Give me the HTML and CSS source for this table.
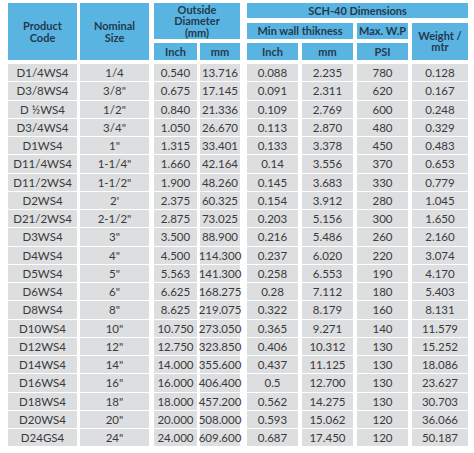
FILE: index.html
```html
<!DOCTYPE html>
<html>
<head>
<meta charset="utf-8">
<link rel="stylesheet" href="styles.css">
</head>
<body>
<div class="table">
  <div class="head">
    <div class="h c-code">Product<br>Code</div>
    <div class="h c-nom">Nominal<br>Size</div>
    <div class="h c-od">Outside<br>Diameter<br>(mm)</div>
    <div class="h c-sch">SCH-40 Dimensions</div>
    <div class="h c-min">Min wall thikness</div>
    <div class="h c-max">Max. W.P</div>
    <div class="h c-wt">Weight /<br>mtr</div>
    <div class="h r3 col3">Inch</div>
    <div class="h r3 col4">mm</div>
    <div class="h r3 col5">Inch</div>
    <div class="h r3 col6">mm</div>
    <div class="h r3 col7">PSI</div>
  </div>
  <div class="body" id="body"></div>
</div>
<script src="app.js"></script>
</body>
</html>
```
FILE: app.js
```js
const rows = [
["D1/4WS4","1/4","0.540","13.716","0.088","2.235","780","0.128"],
["D3/8WS4","3/8\"","0.675","17.145","0.091","2.311","620","0.167"],
["D ½WS4","1/2\"","0.840","21.336","0.109","2.769","600","0.248"],
["D3/4WS4","3/4\"","1.050","26.670","0.113","2.870","480","0.329"],
["D1WS4","1\"","1.315","33.401","0.133","3.378","450","0.483"],
["D11/4WS4","1-1/4\"","1.660","42.164","0.14","3.556","370","0.653"],
["D11/2WS4","1-1/2\"","1.900","48.260","0.145","3.683","330","0.779"],
["D2WS4","2'","2.375","60.325","0.154","3.912","280","1.045"],
["D21/2WS4","2-1/2\"","2.875","73.025","0.203","5.156","300","1.650"],
["D3WS4","3\"","3.500","88.900","0.216","5.486","260","2.160"],
["D4WS4","4\"","4.500","114.300","0.237","6.020","220","3.074"],
["D5WS4","5\"","5.563","141.300","0.258","6.553","190","4.170"],
["D6WS4","6\"","6.625","168.275","0.28","7.112","180","5.403"],
["D8WS4","8\"","8.625","219.075","0.322","8.179","160","8.131"],
["D10WS4","10\"","10.750","273.050","0.365","9.271","140","11.579"],
["D12WS4","12\"","12.750","323.850","0.406","10.312","130","15.252"],
["D14WS4","14\"","14.000","355.600","0.437","11.125","130","18.086"],
["D16WS4","16\"","16.000","406.400","0.5","12.700","130","23.627"],
["D18WS4","18\"","18.000","457.200","0.562","14.275","130","30.703"],
["D20WS4","20\"","20.000","508.000","0.593","15.062","120","36.066"],
["D24GS4","24\"","24.000","609.600","0.687","17.450","120","50.187"]
];
const body = document.getElementById("body");
for (const r of rows) {
  r.forEach((v, i) => {
    const d = document.createElement("div");
    d.className = "d k" + (i + 1);
    d.textContent = v;
    body.appendChild(d);
  });
}
```
FILE: styles.css
```css
html, body { margin: 0; padding: 0; background: #ffffff; }
body { padding: 3px 0 0 8px; }
.table { width: 460px; }
.head, .body {
  display: grid;
  grid-template-columns: 69px 3px 69px 5px 43px 3px 40px 7px 51px 4px 51px 4px 51px 4px 56px;
  column-gap: 0;
}
.head {
  grid-template-rows: 15px 16px 17px;
  row-gap: 4.5px;
}
.body {
  margin-top: 4px;
  grid-auto-rows: 17.25px;
  row-gap: 1px;
}
.h {
  background: #5ab4e1;
  color: #233a4e;
  font-family: Lato, "Open Sans", sans-serif;
  font-weight: bold;
  font-size: 11px;
  line-height: 11.5px;
  display: flex;
  align-items: center;
  justify-content: center;
  text-align: center;
}
.c-code { grid-column: 1; grid-row: 1 / 4; }
.c-nom { grid-column: 3; grid-row: 1 / 4; }
.c-od { grid-column: 5 / 8; grid-row: 1 / 3; }
.c-sch { grid-column: 9 / 16; grid-row: 1; }
.c-min { grid-column: 9 / 12; grid-row: 2; }
.c-max { grid-column: 13; grid-row: 2; }
.c-wt { grid-column: 15; grid-row: 2 / 4; }
.r3 { grid-row: 3; }
.col3 { grid-column: 5; }
.col4 { grid-column: 7; }
.col5 { grid-column: 9; }
.col6 { grid-column: 11; }
.col7 { grid-column: 13; }
.k1 { grid-column: 1; }
.k2 { grid-column: 3; }
.k3 { grid-column: 5; }
.k4 { grid-column: 7; }
.k5 { grid-column: 9; }
.k6 { grid-column: 11; }
.k7 { grid-column: 13; }
.k8 { grid-column: 15; }
.d {
  background: #dddee0;
  color: #3a3a3a;
  font-family: Lato, "Open Sans", sans-serif;
  font-size: 11.5px;
  display: flex;
  align-items: center;
  justify-content: center;
  white-space: nowrap;
}
```
